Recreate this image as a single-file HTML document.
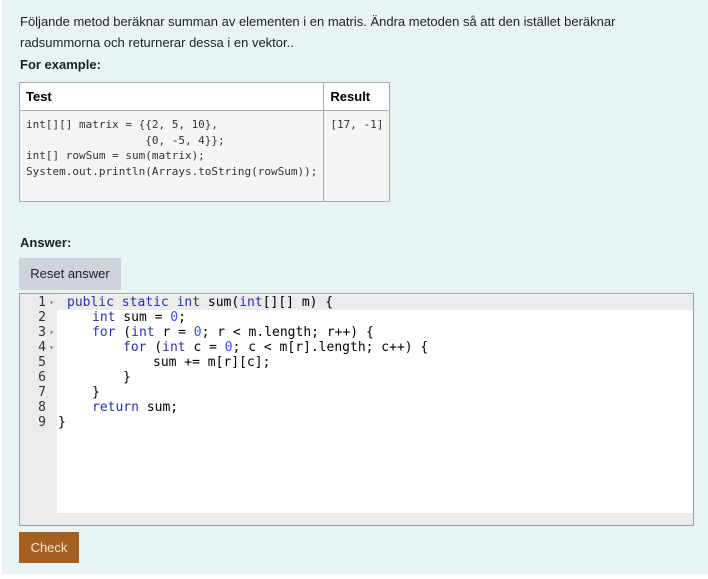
<!DOCTYPE html>
<html><head><meta charset="utf-8"><style>
body{margin:0;background:#fff;width:708px;height:579px;overflow:hidden;font-family:"Liberation Sans",sans-serif;}
.q{position:absolute;left:2px;top:0;width:706px;height:574px;background:#e7f3f5;}
.t{position:absolute;left:20px;top:11px;font-size:13px;line-height:21px;color:#1d2125;width:660px;}
.b{position:absolute;font-size:13px;font-weight:bold;color:#1d2125;}
table{position:absolute;left:19px;top:82px;border-collapse:collapse;background:#f5f5f5;}
td,th{border:1px solid #a9adb1;vertical-align:top;text-align:left;padding:0 6px;}
th{background:#fff;height:27px;font-size:13px;line-height:27px;}
td{height:91px;font-family:"DejaVu Sans Mono",monospace;font-size:11px;line-height:15.5px;padding-top:6px;white-space:pre;color:#333;box-sizing:border-box;}
.rb{position:absolute;left:19px;top:258px;width:102px;height:32px;background:#ced4da;font-size:13px;line-height:32px;text-align:center;color:#1d2125;}
.ed{position:absolute;left:19px;top:293px;width:673px;height:231px;border:1px solid #9aa0a6;background:#ebebeb;}
.code{position:absolute;left:37px;top:0;width:636px;height:219px;background:#fff;}
.al{position:absolute;left:0;top:1px;width:673px;height:15px;background:#ebebeb;}
.gut{position:absolute;left:0;top:1px;width:37px;font-family:"DejaVu Sans Mono",monospace;font-size:13px;line-height:15px;color:#333;}
.gut div{text-align:right;padding-right:11px;position:relative;}
.gut .f:after{content:"▾";position:absolute;right:3px;font-size:8px;color:#777;}
.src{position:absolute;left:47px;top:1px;font-family:"DejaVu Sans Mono",monospace;font-size:13px;line-height:15px;color:#000;}
.src div{height:15px;white-space:pre}
.k{color:#2a33a6}.n{color:#3b4ff5}
.ck{position:absolute;left:19px;top:532px;width:60px;height:31px;background:#a55f20;color:#f5e6cf;font-size:13px;line-height:31px;text-align:center;}
</style></head><body>
<div class="q"></div>
<div class="t">Följande metod beräknar summan av elementen i en matris. Ändra metoden så att den istället beräknar radsummorna och returnerar dessa i en vektor..</div>
<div class="b" style="left:20px;top:57px">For example:</div>
<table><tr><th style="width:290px">Test</th><th style="width:47px">Result</th></tr>
<tr><td>int[][] matrix = {{2, 5, 10},
                  {0, -5, 4}};
int[] rowSum = sum(matrix);
System.out.println(Arrays.toString(rowSum));</td><td>[17, -1]</td></tr></table>
<div class="b" style="left:20px;top:235px">Answer:</div>
<div class="rb">Reset answer</div>
<div class="ed"><div class="code"></div><div class="al"></div>
<div class="gut"><div class="f">1</div><div>2</div><div class="f">3</div><div class="f">4</div><div>5</div><div>6</div><div>7</div><div>8</div><div>9</div></div>
<div class="src"><div><span class="k">public static int</span> sum(<span class="k">int</span>[][] m) {</div><div style="padding-left:25px"><span class="k">int</span> sum = <span class="n">0</span>;</div><div style="padding-left:25px"><span class="k">for</span> (<span class="k">int</span> r = <span class="n">0</span>; r &lt; m.length; r++) {</div><div style="padding-left:56px"><span class="k">for</span> (<span class="k">int</span> c = <span class="n">0</span>; c &lt; m[r].length; c++) {</div><div style="padding-left:86px">sum += m[r][c];</div><div style="padding-left:56px">}</div><div style="padding-left:25px">}</div><div style="padding-left:25px"><span class="k">return</span> sum;</div><div style="margin-left:-9px">}</div></div></div>
<div class="ck">Check</div>
</body></html>
